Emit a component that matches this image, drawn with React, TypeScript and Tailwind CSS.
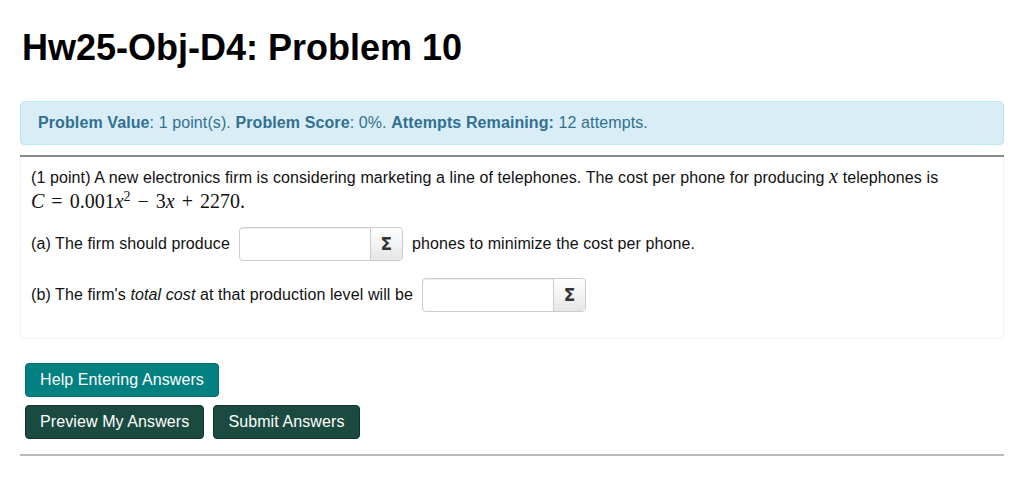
import React from "react";

function SigmaInput() {
  return (
    <div className="flex h-[34px] w-[164px] rounded-[4px] border border-[#cccccc] bg-white shadow-[inset_0_1px_1px_rgba(0,0,0,0.075)]">
      <div className="flex-1" />
      <div className="flex w-[32px] items-center justify-center rounded-r-[4px] border-l border-[#cccccc] bg-gradient-to-b from-[#ffffff] to-[#e6e6e6]">
        <span className="text-[17px] font-bold leading-none text-[#333]" style={{ fontFamily: '"DejaVu Sans", sans-serif' }}>Σ</span>
      </div>
    </div>
  );
}

export default function App() {
  const serif = { fontFamily: '"Liberation Serif", "DejaVu Serif", serif' };
  return (
    <div className="min-h-[488px] bg-white px-[20px] text-[16px] tracking-[0.1px] text-[#111]" style={{ fontFamily: '"Liberation Sans", Arial, sans-serif' }}>
      <h1 className="pt-[28px] pl-[2px] text-[36px] font-bold leading-[40px] tracking-normal text-black">Hw25-Obj-D4: Problem 10</h1>
      <div className="mt-[33px] flex h-[44px] w-[984px] items-center rounded-[4px] border border-[#bce8f1] bg-[#d9edf7] pl-[17px] text-[16px] text-[#31708f]">
        <span>
          <b>Problem Value</b>: 1 point(s). <b>Problem Score</b>: 0%. <b>Attempts Remaining:</b> 12 attempts.
        </span>
      </div>
      <div className="mt-[10px] w-[984px] border-t-2 border-[#888888]">
        <div className="h-[182px] border-x border-b border-[#f4f4f4] px-[10px] pt-[8px]">
          <div className="leading-[22px]">
            (1 point) A new electronics firm is considering marketing a line of telephones. The cost per phone for producing{" "}
            <i className="text-[20px]" style={serif}>x</i> telephones is
          </div>
          <div className="text-[20px] leading-[24px] tracking-normal" style={serif}>
            <i>C</i>
            <span className="mx-[7px]">=</span>0.001<i>x</i>
            <sup className="text-[14px]">2</sup>
            <span className="mx-[7px]">−</span>3<i>x</i>
            <span className="mx-[7px]">+</span>2270.
          </div>
          <div className="mt-[14px] flex items-center gap-[9px]">
            <span>(a) The firm should produce</span>
            <SigmaInput />
            <span>phones to minimize the cost per phone.</span>
          </div>
          <div className="mt-[17px] flex items-center gap-[9px]">
            <span>
              (b) The firm's <i>total cost</i> at that production level will be
            </span>
            <SigmaInput />
          </div>
        </div>
      </div>
      <div className="mt-[24px] pl-[5px]">
        <button className="h-[34px] rounded-[4px] border border-[#006b6b] bg-[#038080] px-[14px] text-[16px] text-white">Help Entering Answers</button>
        <div className="mt-[8px] flex gap-[9px]">
          <button className="h-[34px] rounded-[4px] border border-[#11332c] bg-[#1b4a40] px-[14px] text-[16px] text-white">Preview My Answers</button>
          <button className="h-[34px] rounded-[4px] border border-[#11332c] bg-[#1b4a40] px-[14px] text-[16px] text-white">Submit Answers</button>
        </div>
      </div>
      <div className="mt-[15px] w-[984px] border-t-2 border-[#bbbbbb]" />
    </div>
  );
}
